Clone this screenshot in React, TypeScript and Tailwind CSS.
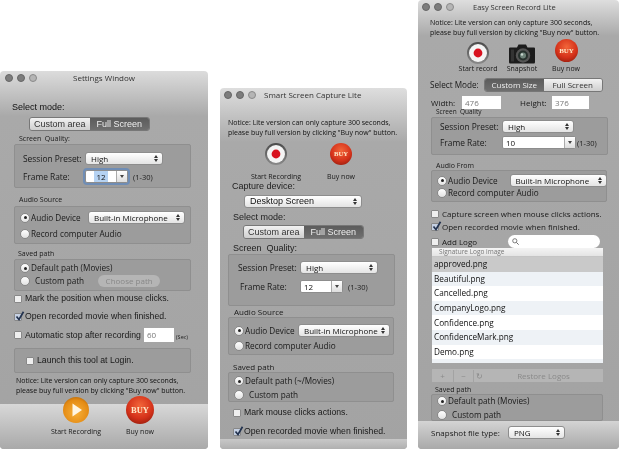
import type { ReactNode } from 'react';

const arial = "font-['Liberation_Sans',sans-serif]";

const Small = ({ className = '', children }: { className?: string; children: ReactNode }) => (
  <div className={`text-[7px] leading-[10px] text-[#1a1a1a] whitespace-pre ${className}`}>{children}</div>
);

const Lights = ({ className = '' }: { className?: string }) => (
  <div className={`flex gap-[4px] ${className}`}>
    <span className="size-[8px] rounded-full bg-[#7d7d7d] border border-[#666]" />
    <span className="size-[8px] rounded-full bg-[#7d7d7d] border border-[#666]" />
    <span className="size-[8px] rounded-full bg-[#b5b5b5] border border-[#8a8a8a]" />
  </div>
);

const Group = ({ className = '', children }: { className?: string; children: ReactNode }) => (
  <div className={`rounded-[2px] border border-[#8f8f8f] bg-[#9c9c9c] ${className}`}>{children}</div>
);

const Select = ({ label, className = '' }: { label: string; className?: string }) => (
  <div className={`flex h-[13px] items-center justify-between rounded-[3px] bg-gradient-to-b from-white to-[#e4e4e4] border border-[#8d8d8d] pl-[5px] pr-[4px] text-[8px] leading-[11px] text-[#111] whitespace-nowrap shrink-0 ${className}`}>
    <span>{label}</span>
    <span className="flex flex-col items-center gap-[1px]">
      <span className="block size-0 border-x-[2px] border-b-[3px] border-x-transparent border-b-[#333]" />
      <span className="block size-0 border-x-[2px] border-t-[3px] border-x-transparent border-t-[#333]" />
    </span>
  </div>
);

const Combo = ({ value, width, focus = false, center = false }: { value: string; width: string; focus?: boolean; center?: boolean }) => (
  <div className={`flex h-[13px] shrink-0 ${width} rounded-[2px] border border-[#8d8d8d] bg-white text-[8px] leading-[11px] text-[#111] ${focus ? 'ring-2 ring-[#6f8db5]' : ''}`}>
    <div className={`flex-1 flex items-center px-[3px] ${center ? 'justify-center' : ''}`}>
      <span className={focus ? 'bg-[#b5d2f2] px-[2px]' : ''}>{value}</span>
    </div>
    <div className="flex w-[11px] items-center justify-center border-l border-[#aaa] bg-gradient-to-b from-white to-[#ddd]">
      <span className="block size-0 border-x-[2px] border-t-[3px] border-x-transparent border-t-[#444]" />
    </div>
  </div>
);

const Radio = ({ on = false }: { on?: boolean }) => (
  <span className="flex size-[10px] shrink-0 items-center justify-center rounded-full border border-[#888] bg-gradient-to-b from-white to-[#e2e2e2]">
    {on && <span className="size-[3px] rounded-full bg-[#222]" />}
  </span>
);

const Check = ({ on = false, label, className = '' }: { on?: boolean; label: string; className?: string }) => (
  <div className={`flex items-center gap-[3px] leading-[13px] text-[#1a1a1a] whitespace-nowrap ${className}`}>
    <span className={`relative size-[8px] shrink-0 rounded-[1px] border border-[#888] ${on ? 'bg-[#c5d0e2]' : 'bg-[#efefef]'}`}>
      {on && (
        <svg viewBox="0 0 10 10" className="absolute -top-[3px] left-0 size-[10px]">
          <path d="M1.5 5.5 L4 8.5 L8.5 0.8" fill="none" stroke="#22324f" strokeWidth="1.7" />
        </svg>
      )}
    </span>
    {label}
  </div>
);

const Seg = ({ left, right, dark, className = '' }: { left: string; right: string; dark: 'left' | 'right'; className?: string }) => {
  const light = 'bg-gradient-to-b from-[#f2f2f2] to-[#cfcfcf] text-[#333]';
  const heavy = 'bg-gradient-to-b from-[#5c5c5c] to-[#6f6f6f] text-[#eee]';
  return (
    <div className={`flex h-[14px] overflow-hidden rounded-[3px] border border-[#777] leading-[12px] whitespace-nowrap ${className}`}>
      <div className={`flex flex-1 items-center justify-center ${dark === 'left' ? heavy : light}`}>{left}</div>
      <div className={`flex flex-1 items-center justify-center ${dark === 'right' ? heavy : light}`}>{right}</div>
    </div>
  );
};

const RecordIcon = ({ className = '' }: { className?: string }) => (
  <svg viewBox="0 0 24 24" className={className}>
    <defs>
      <linearGradient id="ring" x1="0" y1="0" x2="0" y2="1">
        <stop offset="0" stopColor="#4a4a4a" />
        <stop offset="1" stopColor="#8a8a8a" />
      </linearGradient>
    </defs>
    <circle cx="12" cy="12" r="12" fill="url(#ring)" />
    <circle cx="12" cy="12" r="9.8" fill="#f4f4f4" />
    <circle cx="12" cy="12" r="4.8" fill="#d8121f" />
  </svg>
);

const BuyIcon = ({ id, className = '' }: { id: string; className?: string }) => (
  <svg viewBox="0 0 28 28" className={className}>
    <defs>
      <radialGradient id={id} cx="0.5" cy="0.35" r="0.75">
        <stop offset="0" stopColor="#f2663a" />
        <stop offset="0.6" stopColor="#d5321a" />
        <stop offset="1" stopColor="#8e1a0c" />
      </radialGradient>
    </defs>
    <circle cx="14" cy="14" r="14" fill={`url(#${id})`} />
    <text x="14" y="16.5" textAnchor="middle" fontFamily="'Liberation Serif', serif" fontWeight="700" fontSize="8.5" fill="#ffe9c9">BUY</text>
  </svg>
);

const PlayIcon = ({ className = '' }: { className?: string }) => (
  <svg viewBox="0 0 26 26" className={className}>
    <defs>
      <radialGradient id="play" cx="0.5" cy="0.6" r="0.7">
        <stop offset="0" stopColor="#f8b13a" />
        <stop offset="0.7" stopColor="#e48b14" />
        <stop offset="1" stopColor="#a85d08" />
      </radialGradient>
    </defs>
    <circle cx="13" cy="13" r="13" fill="url(#play)" />
    <path d="M9.5 6.5 L19 13 L9.5 19.5 Z" fill="#fff6e4" />
  </svg>
);

const CameraIcon = ({ className = '' }: { className?: string }) => (
  <svg viewBox="0 0 26 20" className={className}>
    <path d="M1 4 L8 4 L9.5 1 L17 1 L18.5 4 L25 4 Q26 4 26 5 L26 18.5 Q26 20 25 20 L1 20 Q0 20 0 18.5 L0 5 Q0 4 1 4 Z" fill="#1c1c1c" />
    <rect x="2" y="6" width="3" height="12" fill="#333" />
    <circle cx="14" cy="12" r="7.2" fill="#555" />
    <circle cx="14" cy="12" r="5" fill="#26302c" />
    <circle cx="14" cy="12" r="3" fill="#6d8278" />
    <circle cx="13" cy="11" r="1.2" fill="#c8d6cf" />
  </svg>
);

const Notice = ({ className = '' }: { className?: string }) => (
  <div className={`text-[7px] leading-[9.5px] text-[#111] whitespace-nowrap ${className}`}>
    Notice: Lite version can only capture 300 seconds,
    <br />
    please buy full version by clicking "Buy now" button.
  </div>
);

const RadioRow = ({ on, label, className = '', gap = 'gap-[1px]' }: { on?: boolean; label: string; className?: string; gap?: string }) => (
  <div className={`flex items-center ${gap} text-[8.2px] leading-[12px] text-[#1a1a1a] whitespace-nowrap ${className}`}>
    <Radio on={on} />
    {label}
  </div>
);

const FieldLabel = ({ children, className = '' }: { children: ReactNode; className?: string }) => (
  <span className={`w-[62px] shrink-0 text-[8.4px] leading-[12px] text-[#1a1a1a] whitespace-nowrap ${className}`}>{children}</span>
);

function SettingsWindow() {
  return (
    <div className="absolute left-0 top-[71px] flex h-[378px] w-[208px] flex-col rounded-[4px] bg-gradient-to-b from-[#dcdcdc] via-[#a9a9a9] via-[12%] to-[#a3a3a3]">
      <div className="relative h-[14px]">
        <Lights className="absolute left-[5px] top-[3px]" />
        <div className="pt-[1px] text-center text-[8px] leading-[12px] text-[#333]">Settings Window</div>
      </div>
      <div className="flex-1 pl-[12px] pr-[17px]">
        <div className={`mt-[16px] text-[9px] leading-[12px] text-[#111] ${arial}`}>Select mode:</div>
        <Seg left="Custom area" right="Full Screen" dark="right" className={`ml-[17px] mt-[4px] w-[121px] text-[9px] ${arial}`} />
        <Small className="ml-[7px] mt-[3px]">Screen  Quality:</Small>
        <Group className="ml-[2px] h-[44px] w-[177px] pl-[8px] pt-[7px]">
          <div className="flex items-center">
            <FieldLabel>Session Preset:</FieldLabel>
            <Select label="High" className="w-[78px]" />
          </div>
          <div className="mt-[5px] flex items-center">
            <FieldLabel>Frame Rate:</FieldLabel>
            <Combo value="12" width="w-[43px]" focus center />
            <span className="ml-[5px] text-[7.5px] leading-[12px] text-[#222]">(1-30)</span>
          </div>
        </Group>
        <Small className="ml-[7px] mt-[7px]">Audio Source</Small>
        <Group className="ml-[2px] mt-[1px] h-[38px] w-[177px] px-[5px] pt-[4px]">
          <div className="flex items-center justify-between">
            <RadioRow on label="Audio Device" />
            <Select label="Built-in Microphone" className="w-[97px]" />
          </div>
          <RadioRow label="Record computer Audio" className="mt-[4px]" />
        </Group>
        <Small className="ml-[6px] mt-[5px]">Saved path</Small>
        <Group className="ml-[2px] h-[32px] w-[177px] px-[5px] pt-[2px]">
          <RadioRow on label="Default path (Movies)" />
          <div className="mt-[1px] flex items-center">
            <RadioRow label="Custom path" gap="gap-[5px]" />
            <div className="ml-[14px] flex h-[12px] w-[62px] items-center justify-center rounded-full bg-[#b5b5b5] text-[8px] text-[#888]">Choose path</div>
          </div>
        </Group>
        <Check label="Mark the position when mouse clicks." className={`ml-[2px] mt-[1px] text-[8.7px] ${arial}`} />
        <Check on label="Open recorded movie when finished." className={`ml-[2px] mt-[5px] text-[8.7px] ${arial}`} />
        <div className="ml-[2px] mt-[5px] flex items-center">
          <Check label="Automatic stop after recording" className={`w-[130px] text-[8.7px] ${arial}`} />
          <div className="flex h-[14px] w-[30px] items-center bg-white pl-[3px] text-[8px] text-[#777]">60</div>
          <span className="ml-[2px] mt-[5px] text-[5.5px] text-[#222]">(Sec)</span>
        </div>
        <Group className="ml-[2px] mt-[6px] flex h-[25px] w-[177px] items-center pl-[11px]">
          <Check label="Launch this tool at Login." className={`text-[8.7px] ${arial}`} />
        </Group>
        <Notice className="ml-[4px] mt-[3px]" />
      </div>
      <div className="h-[45px] rounded-b-[4px] bg-gradient-to-b from-[#d8d8d8] to-[#a9a9a9]">
        <div className="-mt-[7px] flex">
          <div className="ml-[50px] flex w-[52px] flex-col items-center">
            <PlayIcon className="size-[26px]" />
            <Small className="mt-[4px]">Start Recording</Small>
          </div>
          <div className="ml-[12px] flex w-[52px] flex-col items-center">
            <BuyIcon id="buy1" className="mt-[-1px] size-[28px]" />
            <Small className="mt-[3px]">Buy now</Small>
          </div>
        </div>
      </div>
    </div>
  );
}

function CaptureWindow() {
  return (
    <div className="absolute left-[220px] top-[88px] flex h-[361px] w-[187px] flex-col rounded-[4px] bg-gradient-to-b from-[#dedede] via-[#a9a9a9] via-[15%] to-[#a3a3a3]">
      <div className="flex h-[14px] items-center pl-[4px]">
        <Lights />
        <div className="ml-[8px] text-[8px] leading-[12px] text-[#333] whitespace-nowrap">Smart Screen Capture Lite</div>
      </div>
      <div className="flex-1 pl-[8px]">
        <Notice className="mt-[16px]" />
        <div className="mt-[6px] flex">
          <div className="ml-[22px] flex w-[52px] flex-col items-center">
            <RecordIcon className="size-[22px]" />
            <Small className="mt-[7px]">Start Recording</Small>
          </div>
          <div className="ml-[24px] flex w-[30px] flex-col items-center">
            <BuyIcon id="buy2" className="size-[22px]" />
            <Small className="mt-[7px]">Buy now</Small>
          </div>
        </div>
        <div className={`ml-[4px] -mt-[2px] text-[9px] leading-[12px] text-[#222] ${arial}`}>Capture device:</div>
        <Select label="Desktop Screen" className={`ml-[16px] mt-[3px] w-[118px] !text-[9px] ${arial}`} />
        <div className={`ml-[5px] mt-[3px] text-[9px] leading-[12px] text-[#222] ${arial}`}>Select mode:</div>
        <Seg left="Custom area" right="Full Screen" dark="right" className={`ml-[15px] mt-[2px] w-[121px] text-[9px] ${arial}`} />
        <div className={`ml-[5px] mt-[3px] text-[9px] leading-[12px] text-[#222] whitespace-pre ${arial}`}>Screen  Quality:</div>
        <Group className="h-[52px] w-[167px] pl-[9px] pt-[6px]">
          <div className="flex items-center">
            <FieldLabel>Session Preset:</FieldLabel>
            <Select label="High" className="w-[78px]" />
          </div>
          <div className="mt-[6px] flex items-center">
            <FieldLabel className="pl-[2px]">Frame Rate:</FieldLabel>
            <Combo value="12" width="w-[43px]" />
            <span className="ml-[5px] text-[7.5px] leading-[12px] text-[#222]">(1-30)</span>
          </div>
        </Group>
        <Small className="ml-[6px] mt-[1px] !text-[8px]">Audio Source</Small>
        <Group className="h-[38px] w-[166px] pl-[5px] pr-[3px] pt-[6px]">
          <div className="flex items-center justify-between">
            <RadioRow on label="Audio Device" />
            <Select label="Built-in Microphone" className="w-[92px]" />
          </div>
          <RadioRow label="Record computer Audio" className="mt-[3px]" />
        </Group>
        <Small className="ml-[5px] mt-[7px] !text-[8px]">Saved path</Small>
        <Group className="h-[30px] w-[166px] pl-[5px] pt-[2px]">
          <RadioRow on label="Default path (~/Movies)" />
          <RadioRow label="Custom path" gap="gap-[5px]" className="mt-[2px]" />
        </Group>
        <Check label="Mark mouse clicks actions." className={`ml-[5px] mt-[4px] text-[8.7px] ${arial}`} />
        <Check on label="Open recorded movie when finished." className={`ml-[5px] mt-[6px] text-[8.7px] ${arial}`} />
      </div>
      <div className="h-[10px] rounded-b-[4px] bg-gradient-to-b from-[#c8c8c8] to-[#b0b0b0]" />
    </div>
  );
}

const logos = ['Beautiful.png', 'Cancelled.png', 'CompanyLogo.png', 'Confidence.png', 'ConfidenceMark.png', 'Demo.png', ''];

function RecordWindow() {
  return (
    <div className="absolute left-[418px] top-0 flex h-[449px] w-[201px] flex-col rounded-[4px] bg-gradient-to-b from-[#dedede] via-[#a9a9a9] via-[8%] to-[#a3a3a3]">
      <div className="relative h-[14px]">
        <Lights className="absolute left-[4px] top-[3px]" />
        <div className="pl-[55px] pt-[1px] text-[7.5px] leading-[12px] text-[#333] whitespace-nowrap">Easy Screen Record Lite</div>
      </div>
      <div className="flex-1 pl-[12px]">
        <Notice className="mt-[4px]" />
        <div className="mt-[5px] flex">
          <div className="ml-[23px] flex w-[50px] flex-col items-center">
            <RecordIcon className="size-[22px]" />
            <Small>Start record</Small>
          </div>
          <div className="flex w-[38px] flex-col items-center">
            <CameraIcon className="mt-[1px] h-[21px] w-[26px]" />
            <Small>Snapshot</Small>
          </div>
          <div className="ml-[8px] flex w-[34px] flex-col items-center">
            <BuyIcon id="buy3" className="-mt-[3px] size-[23px]" />
            <Small className="mt-[2px]">Buy now</Small>
          </div>
        </div>
        <div className="mt-[4px] flex items-center">
          <span className="w-[54px] text-[8.2px] leading-[12px] text-[#1a1a1a] whitespace-nowrap">Select Mode:</span>
          <Seg left="Custom Size" right="Full Screen" dark="left" className="w-[119px] text-[8px]" />
        </div>
        <div className="ml-[1px] mt-[4px] flex items-center text-[8px] leading-[12px] text-[#1a1a1a]">
          <span className="w-[31px]">Width:</span>
          <div className="flex h-[13px] w-[39px] items-center bg-white pl-[3px] text-[#777]">476</div>
          <span className="ml-[19px] w-[32px]">Height:</span>
          <div className="flex h-[13px] w-[37px] items-center bg-white pl-[3px] text-[#777]">376</div>
        </div>
        <Small className="ml-[6px] -mt-[2px] !text-[6.5px]">Screen  Quality</Small>
        <Group className="ml-[1px] h-[38px] w-[177px] pl-[8px] pt-[2px]">
          <div className="flex items-center">
            <FieldLabel>Session Preset:</FieldLabel>
            <Select label="High" className="w-[72px]" />
          </div>
          <div className="mt-[3px] flex items-center">
            <FieldLabel>Frame Rate:</FieldLabel>
            <Combo value="10" width="w-[74px]" />
            <span className="ml-[1px] text-[7.5px] leading-[12px] text-[#222]">(1-30)</span>
          </div>
        </Group>
        <Small className="ml-[6px] mt-[6px]">Audio From</Small>
        <Group className="ml-[1px] -mt-[1px] h-[32px] w-[176px] pl-[5px] pt-[3px]">
          <div className="flex items-center">
            <RadioRow on label="Audio Device" />
            <Select label="Built-in Microphone" className="ml-[12px] w-[97px]" />
          </div>
          <RadioRow label="Record computer Audio" />
        </Group>
        <Check label="Capture screen when mouse clicks actions." className="ml-[1px] mt-[5px] text-[8px]" />
        <Check on label="Open recorded movie when finished." className="ml-[1px] text-[8px]" />
        <div className="ml-[1px] mt-[2px] flex h-[13px] items-center">
          <Check label="Add Logo" className="w-[77px] text-[8px]" />
          <div className="flex h-[13px] w-[92px] items-center rounded-full bg-white pl-[4px]">
            <svg viewBox="0 0 10 10" className="size-[7px]">
              <circle cx="4" cy="4" r="3" fill="none" stroke="#666" strokeWidth="1.2" />
              <path d="M6.3 6.3 L9.5 9.5" stroke="#666" strokeWidth="1.4" />
            </svg>
          </div>
        </div>
        <div className="ml-[2px] h-[115px] w-[171px] overflow-hidden bg-white text-[8.2px] leading-[12px] text-[#111]">
          <div className="flex h-[9px] items-center border-b border-[#c5c5c5] bg-gradient-to-b from-[#f4f4f4] to-[#e4e4e4] pl-[7px] text-[6.5px] text-[#777]">Signature Logo image</div>
          <div className="flex h-[14.6px] items-center bg-[#c9c9c9] pl-[2px]">approved.png</div>
          {logos.map((name, i) => (
            <div key={i} className={`flex h-[14.6px] items-center pl-[2px] ${i % 2 === 0 ? 'bg-[#eef2f6]' : 'bg-white'}`}>
              {name}
            </div>
          ))}
        </div>
        <div className="ml-[2px] mt-[6px] flex h-[13px] w-[171px] items-center bg-[#b5b5b5] text-[8px] leading-[12px] text-[#8a8a8a]">
          <span className="w-[22px] border-r border-[#a3a3a3] text-center">+</span>
          <span className="w-[20px] border-r border-[#a3a3a3] text-center">−</span>
          <span className="w-[10px] text-center">↻</span>
          <span className="flex-1 text-center">Restore Logos</span>
        </div>
        <Small className="ml-[5px] mt-[3px]">Saved path</Small>
        <Group className="ml-[1px] -mt-[1px] h-[27px] w-[172px] pl-[5px]">
          <RadioRow on label="Default path (Movies)" />
          <RadioRow label="Custom path" gap="gap-[5px]" className="mt-[2px]" />
        </Group>
      </div>
      <div className="flex h-[28px] items-center rounded-b-[4px] bg-gradient-to-b from-[#d4d4d4] to-[#a9a9a9] pb-[5px] pl-[13px] text-[8px] leading-[12px] text-[#1a1a1a]">
        <span className="w-[77px] whitespace-nowrap">Snapshot file type:</span>
        <Select label="PNG" className="w-[57px]" />
      </div>
    </div>
  );
}

export default function App() {
  return (
    <div className="relative h-[450px] w-[619px] overflow-hidden bg-white font-['Open_Sans','Liberation_Sans',sans-serif] blur-[0.35px]">
      <SettingsWindow />
      <CaptureWindow />
      <RecordWindow />
    </div>
  );
}
